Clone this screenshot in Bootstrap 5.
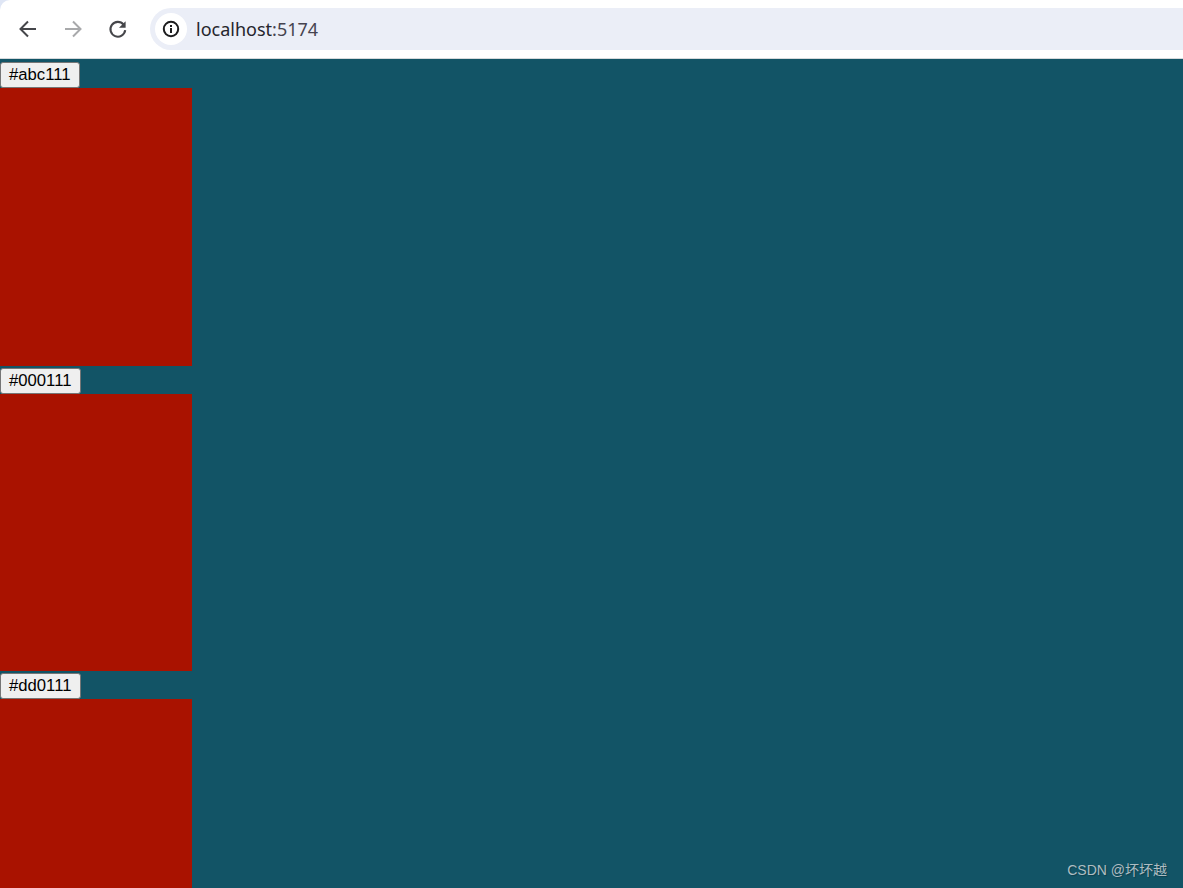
<!DOCTYPE html>
<html lang="zh">
<head>
<meta charset="utf-8">
<title>localhost:5174</title>
<link href="https://cdn.jsdelivr.net/npm/bootstrap@5.3.0/dist/css/bootstrap.min.css" rel="stylesheet">
<style>
html, body { height: 100%; }
body { margin: 0; background: #125466; overflow: hidden; position: relative; font-family: "Liberation Sans", Arial, sans-serif; }
.chrome-wrap { background: #dfe6f5; }
.chrome-bar { height: 59px; background: #fff; border-bottom: 1px solid #d5d9dc; padding-left: 10px; border-top-left-radius: 10px; }
.nav-ico { width: 36px; height: 36px; margin-right: 9px; }
.nav-ico:last-of-type { margin-right: 14px; }
.addr { height: 42px; flex: 1; background: #ebeef7; border-radius: 21px 0 0 21px; padding-left: 5px; margin-top: -1px; }
.info-disc { width: 32px; height: 32px; background: #fff; border-radius: 50%; }
.addr-text { font-family: "Noto Sans", "Open Sans", sans-serif; font-size: 18px; color: #45434f; margin-left: 9px; padding-top: 1px; }
.addr-text b { font-weight: 400; color: #26252c; }
.swatch-sec { height: 305.75px; }
.sec-first { height: 306px; padding-top: 3px; }
.sec-last { height: 217.25px; }
.sec-btn { display: block; height: 25.5px; padding: 1px 8px 0; font: 16.7px/1 "Liberation Sans", Arial, sans-serif; color: #000; background: #efefef; border: 1.5px solid #767676; border-radius: 3px; }
.swatch-box { width: 192px; height: 277.5px; background: #a91200; margin-top: .5px; }
.sec-gap { padding-top: 2.5px; }
.sec-gap .sec-btn { height: 26px; }
.sec-gap .swatch-box { margin-top: 0; }
.sec-last .swatch-box { height: 188.75px; }
.mark-text { position: absolute; right: 16px; bottom: 9px; font-family: "Liberation Sans", "Noto Sans CJK SC", sans-serif; font-size: 14px; line-height: 18px; color: #aebdc2; text-shadow: 1px 1px 1px rgba(0,0,0,.25); }
</style>
</head>
<body>
<div class="chrome-wrap">
<div class="chrome-bar d-flex align-items-center">
  <svg class="nav-ico" viewBox="0 0 36 36" fill="none" stroke="#45464a" stroke-width="2"><path d="M26 18H11M18 10.5 10.5 18l7.5 7.5"/></svg>
  <svg class="nav-ico" viewBox="0 0 36 36" fill="none" stroke="#a8a9ab" stroke-width="2"><path d="M10 18h15M18 10.5l7.5 7.5-7.5 7.5"/></svg>
  <svg class="nav-ico" viewBox="0 0 36 36" fill="none" stroke="#45464a" stroke-width="2.1"><path d="M23.6 13.6a7.4 7.4 0 1 0 1.6 5.6"/><path d="M25.6 10.2v6.6H19z" fill="#45464a" stroke="none"/></svg>
  <div class="addr d-flex align-items-center">
    <div class="info-disc d-flex align-items-center justify-content-center">
      <svg width="18" height="18" viewBox="0 0 18 18" fill="none"><circle cx="9" cy="9" r="7.2" stroke="#1c1c1e" stroke-width="2"/><rect x="8" y="8" width="2" height="5" fill="#1c1c1e"/><rect x="8" y="5" width="2" height="2" fill="#1c1c1e"/></svg>
    </div>
    <span class="addr-text"><b>localhost</b>:5174</span>
  </div>
</div>
</div>
<div class="swatch-sec sec-first">
  <button type="button" class="sec-btn">#abc111</button>
  <div class="swatch-box"></div>
</div>
<div class="swatch-sec sec-gap">
  <button type="button" class="sec-btn">#000111</button>
  <div class="swatch-box"></div>
</div>
<div class="swatch-sec sec-gap sec-last">
  <button type="button" class="sec-btn">#dd0111</button>
  <div class="swatch-box"></div>
</div>
<div class="mark-text">CSDN @坏坏越</div>
<script src="https://cdn.jsdelivr.net/npm/bootstrap@5.3.0/dist/js/bootstrap.bundle.min.js"></script>
</body>
</html>
